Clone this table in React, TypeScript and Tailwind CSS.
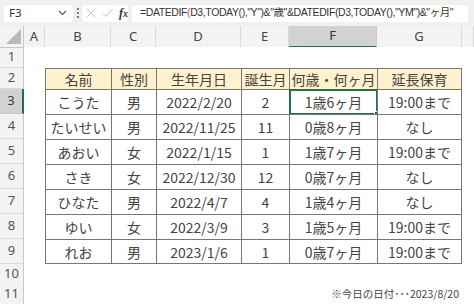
import React from "react";

const GRID = "grid grid-cols-[24px_21px_66px_45px_85px_48px_88px_85px_1fr]";
const JP = { fontFamily: '"Noto Sans CJK JP", "Noto Sans", sans-serif' };
const UI = { fontFamily: '"Noto Sans", "Noto Sans CJK JP", sans-serif' };
const FX = { fontFamily: '"Liberation Sans", "Noto Sans CJK JP", sans-serif' };

const header = ["名前", "性別", "生年月日", "誕生月", "何歳・何ヶ月", "延長保育"];
const data: string[][] = [
  ["こうた", "男", "2022/2/20", "2", "1歳6ヶ月", "19:00まで"],
  ["たいせい", "男", "2022/11/25", "11", "0歳8ヶ月", "なし"],
  ["あおい", "女", "2022/1/15", "1", "1歳7ヶ月", "19:00まで"],
  ["さき", "女", "2022/12/30", "12", "0歳7ヶ月", "なし"],
  ["ひなた", "男", "2022/4/7", "4", "1歳4ヶ月", "なし"],
  ["ゆい", "女", "2022/3/9", "3", "1歳5ヶ月", "19:00まで"],
  ["れお", "男", "2023/1/6", "1", "0歳7ヶ月", "19:00まで"],
];

function RowHead({ n, selected }: { n: number; selected?: boolean }) {
  return (
    <div
      className={
        selected
          ? "flex items-center justify-center bg-[#d2d2d2] border-b border-[#c8c8c8] border-r-2 border-r-[#217346] text-[13px] text-[#3c3c3c]"
          : "flex items-center justify-center bg-[#f3f3f3] border-b border-[#dadada] border-r border-r-[#c8c8c8] text-[13px] text-[#555]"
      }
      style={UI}
    >
      {n}
    </div>
  );
}

function Blank() {
  return <div className="bg-white" />;
}

function TableRow({ n, cells, head, last, hl }: { n: number; cells: string[]; head?: boolean; last?: boolean; hl?: boolean }) {
  const h = head ? "h-[21px]" : "h-[25px]";
  return (
    <div className={`${GRID} ${h}`}>
      <RowHead n={n} selected={hl} />
      <Blank />
      {cells.map((c, i) => (
        <div
          key={i}
          className={
            "relative flex items-center justify-center border-l border-t border-[#777] text-[14px] text-[#444] " +
            (head ? "bg-[#fff2cc] " : "bg-white ") +
            (i === 5 ? "border-r " : "") +
            (last ? "border-b " : "")
          }
          style={JP}
        >
          <span className="leading-none">{c}</span>
          {hl && i === 4 && (
            <div className="absolute -left-px -top-px -right-px -bottom-px border-2 border-[#217346]">
              <div className="absolute -right-[4px] -bottom-[4px] w-[6px] h-[6px] bg-[#217346] border border-white" />
            </div>
          )}
        </div>
      ))}
      <Blank />
    </div>
  );
}

export default function App() {
  const letters = ["A", "B", "C", "D", "E", "F", "G", ""];
  return (
    <div className="w-[474px] h-[304px] overflow-hidden bg-white flex flex-col">
      {/* formula bar */}
      <div className="h-[26px] bg-[#f0f0f0] flex items-center pl-[4px] pr-[6px] gap-0 shrink-0">
        <div className="h-[17px] w-[69px] bg-white rounded-[3px] flex items-center pl-[5px] pr-[6px] justify-between">
          <span className="text-[11.5px] text-[#333]" style={UI}>F3</span>
          <svg width="9" height="6" viewBox="0 0 9 6">
            <path d="M1 1 L4.5 4.5 L8 1" stroke="#555" strokeWidth="1.1" fill="none" />
          </svg>
        </div>
        <div className="w-[9px] flex flex-col items-center justify-center gap-[2px]">
          <div className="w-[2px] h-[2px] bg-[#777]" />
          <div className="w-[2px] h-[2px] bg-[#777]" />
          <div className="w-[2px] h-[2px] bg-[#777]" />
        </div>
        <div className="h-[17px] w-[46px] bg-white rounded-[3px] flex items-center pl-[4px] gap-[6px]">
          <svg width="10" height="10" viewBox="0 0 10 10">
            <path d="M1 1 L9 9 M9 1 L1 9" stroke="#c2c2c2" strokeWidth="1" fill="none" />
          </svg>
          <svg width="11" height="10" viewBox="0 0 11 10">
            <path d="M1 5.5 L4 8.5 L10 1.5" stroke="#c2c2c2" strokeWidth="1" fill="none" />
          </svg>
          <span className="text-[12px] italic font-semibold text-[#333] leading-none" style={{ fontFamily: '"Liberation Serif", serif' }}>
            f<span className="text-[10px]">x</span>
          </span>
        </div>
        <div className="ml-[4px] h-[17px] flex-1 min-w-0 bg-white rounded-[3px] flex items-center pl-[8px] overflow-hidden">
          <span className="text-[10.5px] tracking-[-0.4px] text-[#333] whitespace-nowrap" style={FX}>
            =DATEDIF<span className="text-[#c55a11]">(</span>D3,TODAY(),"Y")&amp;"歳"&amp;DATEDIF(D3,TODAY(),"YM")&amp;"ヶ月"
          </span>
        </div>
      </div>

      {/* column headers */}
      <div className={`${GRID} h-[21px] shrink-0`}>
        <div className="relative bg-[#f3f3f3] border-r border-b border-[#c8c8c8]">
          <svg className="absolute right-[2px] bottom-[3px]" width="15" height="15" viewBox="0 0 15 15">
            <polygon points="15,0 15,15 0,15" fill="#b9b9b9" />
          </svg>
        </div>
        {letters.map((l, i) => (
          <div
            key={i}
            className={
              l === "F"
                ? "flex items-center justify-center bg-[#d2d2d2] border-r border-[#c8c8c8] border-b-2 border-b-[#217346] text-[13px] text-[#333]"
                : "flex items-center justify-center bg-[#f3f3f3] border-r border-[#dadada] border-b border-b-[#c8c8c8] text-[13px] text-[#444]"
            }
            style={UI}
          >
            {l}
          </div>
        ))}
      </div>

      {/* row 1 */}
      <div className={`${GRID} h-[21px] shrink-0`}>
        <RowHead n={1} />
        <div className="col-span-8 bg-white" />
      </div>

      <TableRow n={2} cells={header} head />
      {data.map((r, i) => (
        <TableRow key={i} n={i + 3} cells={r} hl={i === 0} last={i === data.length - 1} />
      ))}

      {/* row 10 */}
      <div className={`${GRID} h-[20px] shrink-0`}>
        <RowHead n={10} />
        <div className="col-span-8 bg-white" />
      </div>
      {/* row 11 */}
      <div className={`${GRID} h-[20px] shrink-0`}>
        <RowHead n={11} />
        <div className="col-span-7 flex items-center justify-end pr-[3px] text-[10.5px] text-[#444]" style={JP}>
          ※今日の日付･･･2023/8/20
        </div>
        <div />
      </div>
    </div>
  );
}
